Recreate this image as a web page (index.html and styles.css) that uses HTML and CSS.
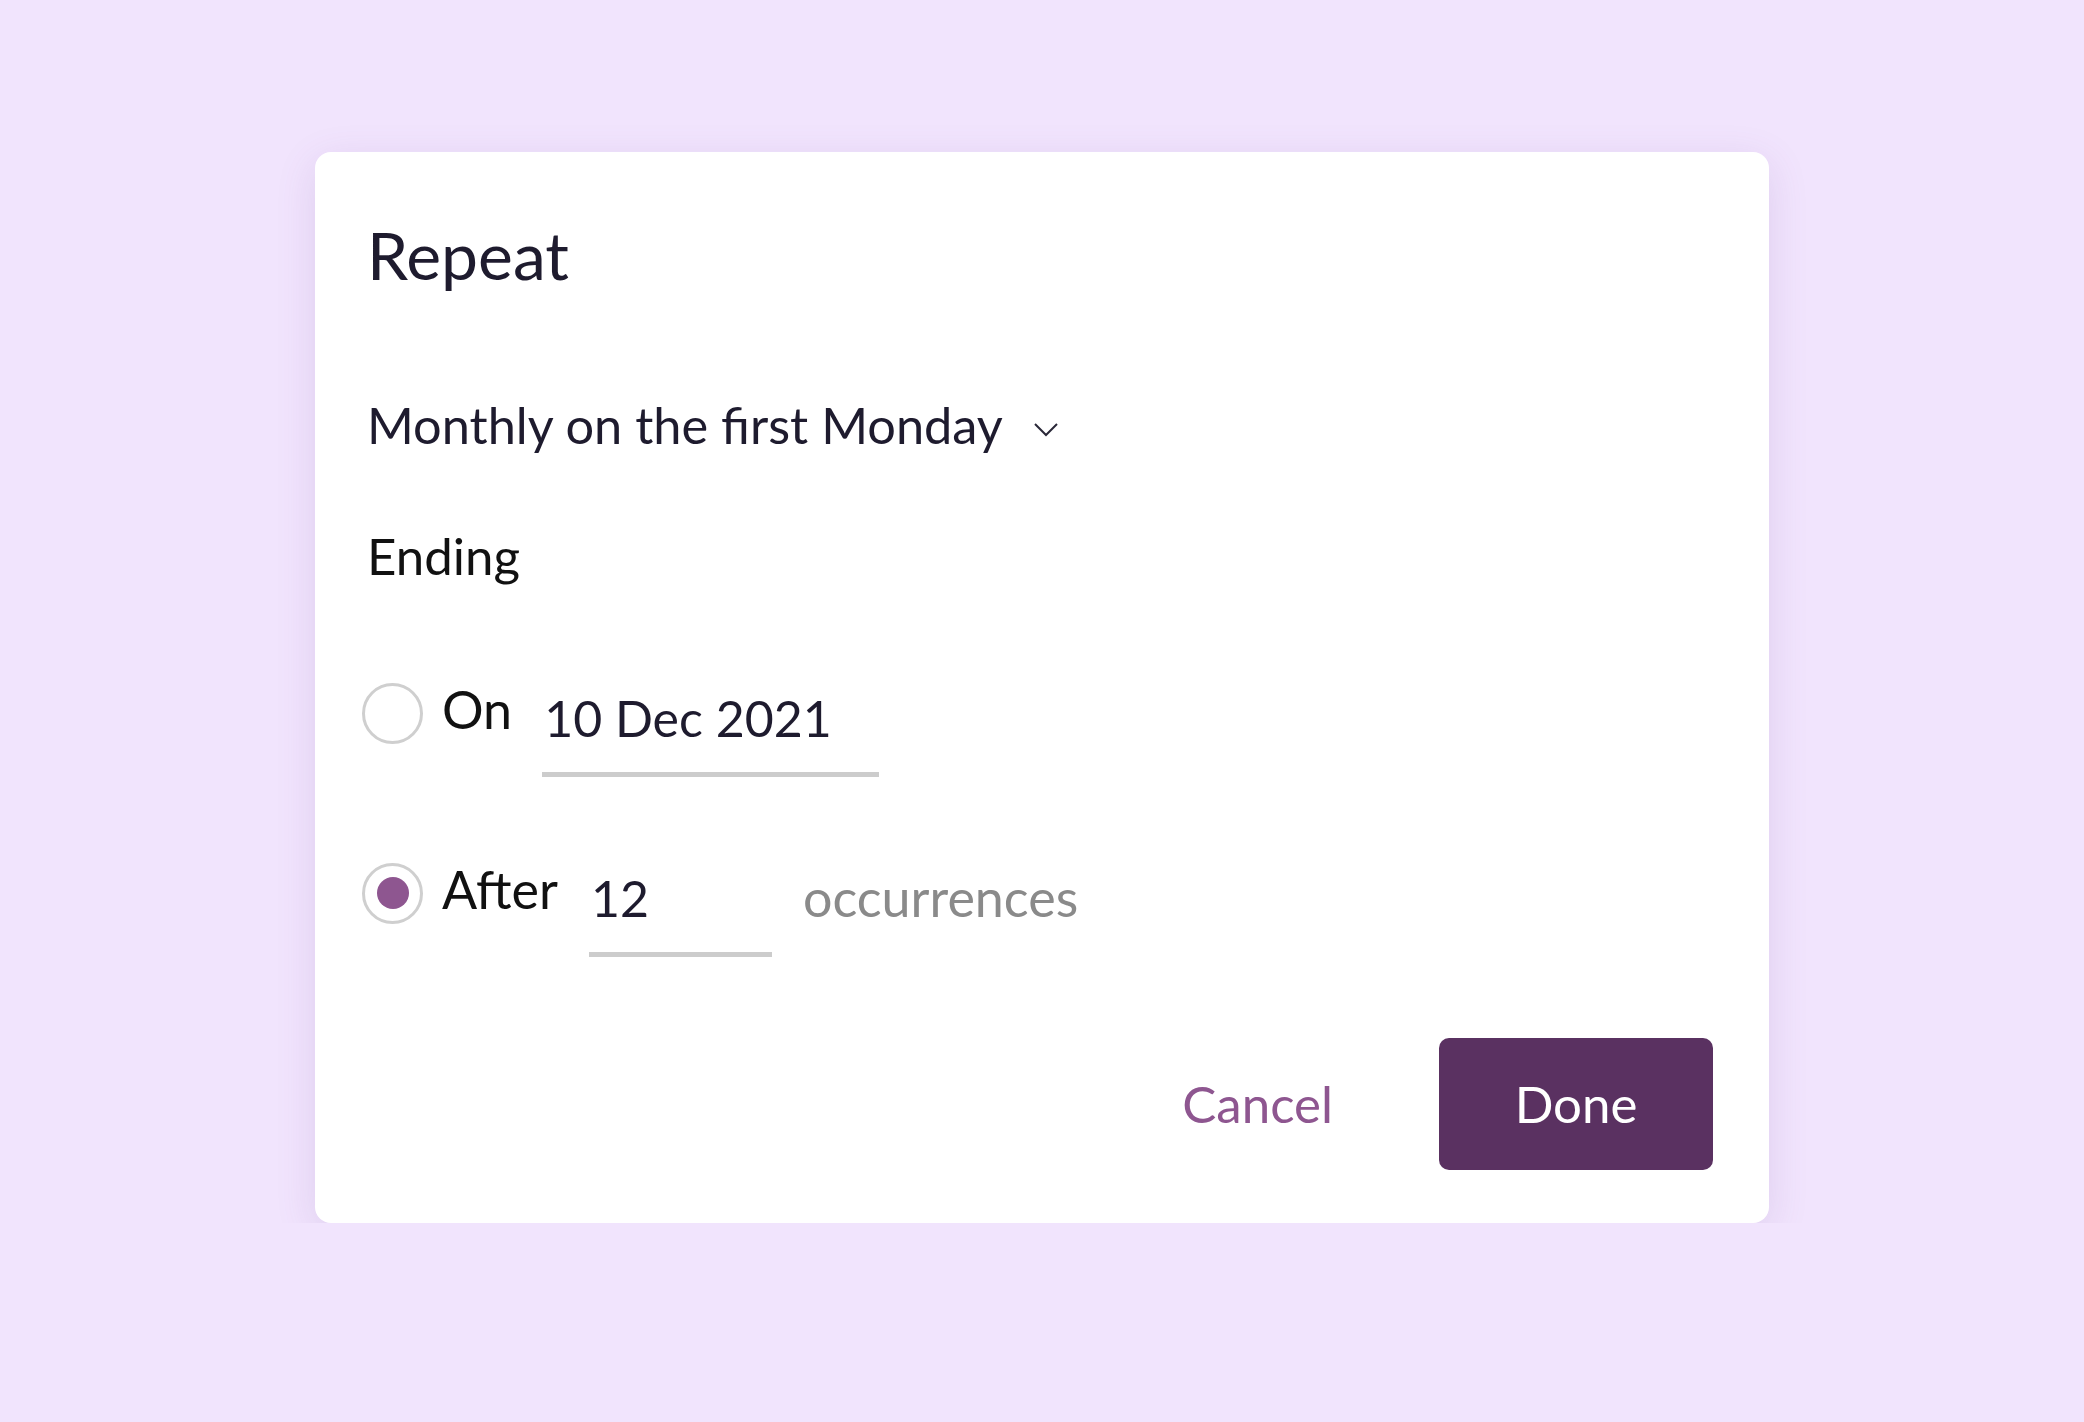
FILE: index.html
```html
<!DOCTYPE html>
<html lang="en">
<head>
  <meta charset="UTF-8">
  <title>Repeat</title>
  <link rel="stylesheet" href="styles.css">
</head>
<body>
  <div class="dialog">
    <h2 class="dialog-title">Repeat</h2>

    <div class="frequency">
      <span>Monthly on the first Monday</span>
      <svg class="chevron" width="26" height="15" viewBox="0 0 26 15">
        <polyline points="2,2 13,13 24,2" fill="none" stroke="#2a2838" stroke-width="2"/>
      </svg>
    </div>

    <div class="section-label">Ending</div>

    <div class="option-row">
      <span class="radio"></span>
      <span class="option-label">On</span>
      <input class="line-input date-input" type="text" value="10 Dec 2021">
    </div>

    <div class="option-row">
      <span class="radio checked"></span>
      <span class="option-label">After</span>
      <input class="line-input count-input" type="text" value="12">
      <span class="unit">occurrences</span>
    </div>

    <div class="actions">
      <button class="btn-cancel">Cancel</button>
      <button class="btn-done">Done</button>
    </div>
  </div>
</body>
</html>
```

FILE: styles.css
```css
body {
  font-family: Lato, "Noto Sans", sans-serif;
  background: #f1e4fd;
  color: #1e1b2e;
  margin: 0;
  padding: 152px 0 0;
}

.dialog {
  width: 1454px;
  box-sizing: border-box;
  margin: 0 auto;
  background: #ffffff;
  border-radius: 16px;
  padding: 63px 56px 53px 52px;
  box-shadow: 0 10px 40px rgba(110, 70, 150, 0.14);
}

.dialog-title {
  font-size: 66px;
  font-weight: 400;
  line-height: 1.2;
  margin: 0;
}

.frequency {
  display: flex;
  align-items: center;
  font-size: 50.5px;
  line-height: 1.2;
  margin-top: 101px;
}

.chevron {
  margin-left: 30px;
  margin-top: 8px;
}

.section-label {
  font-size: 51px;
  line-height: 1.2;
  color: #111111;
  margin-top: 69px;
}

.option-row {
  display: flex;
  align-items: flex-start;
  margin-top: 94px;
  font-size: 52px;
  line-height: 1.2;
}

.option-row + .option-row {
  margin-top: 83px;
}

.radio {
  width: 61px;
  height: 61px;
  box-sizing: border-box;
  border: 3px solid #cfcfcf;
  border-radius: 50%;
  margin: 3px 19px 0 -5px;
  display: flex;
  align-items: center;
  justify-content: center;
}

.radio.checked::after {
  content: "";
  width: 32px;
  height: 32px;
  border-radius: 50%;
  background: #8e5690;
}

.option-label {
  color: #111111;
  margin: -2px 30px 0 0;
}

.line-input {
  font-family: inherit;
  font-size: 50px;
  line-height: 1.2;
  color: #1e1b2e;
  border: none;
  border-bottom: 5px solid #cccccc;
  background: transparent;
  padding: 8px 4px 24px 2px;
  outline: none;
}

.date-input {
  width: 337px;
  box-sizing: border-box;
}

.count-input {
  width: 183px;
  box-sizing: border-box;
  margin-left: 1px;
}

.unit {
  color: #8a8a8a;
  margin-left: 31px;
  padding-top: 6px;
}

.actions {
  display: flex;
  justify-content: flex-end;
  align-items: center;
  margin-top: 81px;
}

button {
  font-family: inherit;
  font-size: 51px;
  border: none;
  cursor: pointer;
}

.btn-cancel {
  background: none;
  color: #8e5690;
  padding: 0;
  margin-right: 106px;
}

.btn-done {
  width: 274px;
  height: 132px;
  background: #5a3161;
  color: #ffffff;
  border-radius: 10px;
}
```
